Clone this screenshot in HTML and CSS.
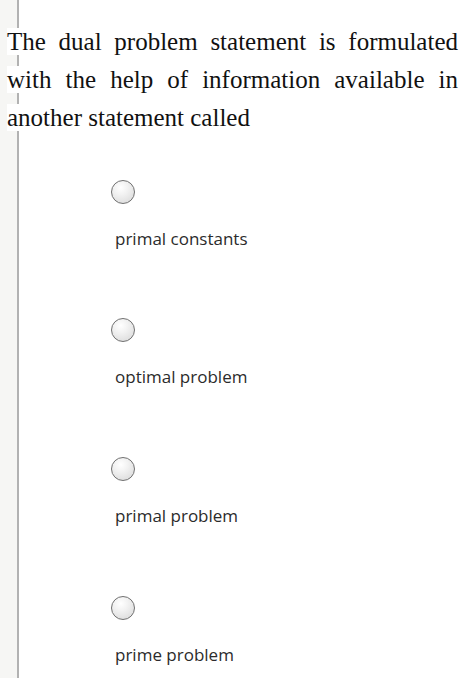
FILE: index.html
```html
<!DOCTYPE html>
<html lang="en">
<head>
<meta charset="utf-8">
<title>Question</title>
<link rel="stylesheet" href="styles.css">
</head>
<body>
<main class="page">
  <p class="question"><span class="question-text">The dual problem statement is formulated with the help of information available in another statement called</span></p>
  <ul class="options">
    <li class="option"><span class="radio"></span><span class="label">primal constants</span></li>
    <li class="option"><span class="radio"></span><span class="label">optimal problem</span></li>
    <li class="option"><span class="radio"></span><span class="label">primal problem</span></li>
    <li class="option"><span class="radio"></span><span class="label">prime problem</span></li>
  </ul>
</main>
</body>
</html>
```

FILE: styles.css
```css
html, body {
  margin: 0;
  padding: 0;
}
body {
  width: 474px;
  min-height: 678px;
  background: linear-gradient(to right, #f6f6f4 0, #f6f6f4 17px, #b2b2b2 17px, #b2b2b2 19px, #ffffff 19px) repeat-y;
}
.page {
  display: flex;
  flex-direction: column;
}
.question {
  margin: 0;
  padding: 23px 16px 0 7px;
  font-family: "Liberation Serif", "Times New Roman", serif;
  font-size: 25px;
  line-height: 38px;
  text-align: justify;
  color: #111;
}
.question-text {
  background: #fff;
}
.options {
  list-style: none;
  margin: 42.5px 0 0 0;
  padding: 0 0 0 111px;
  display: flex;
  flex-direction: column;
  gap: 67.7px;
}
.option {
  display: flex;
  flex-direction: column;
  align-items: flex-start;
  gap: 23px;
}
.radio {
  box-sizing: border-box;
  width: 24px;
  height: 24px;
  border-radius: 50%;
  border: 1.5px solid #707070;
  background: radial-gradient(circle at 40% 30%, #ffffff 0, #f2f2f2 35%, #d6d6d6 100%);
}
.label {
  font-family: "Open Sans", "Noto Sans", sans-serif;
  font-size: 17px;
  line-height: 24px;
  color: #2b2b2b;
  margin-left: 4px;
}
```
